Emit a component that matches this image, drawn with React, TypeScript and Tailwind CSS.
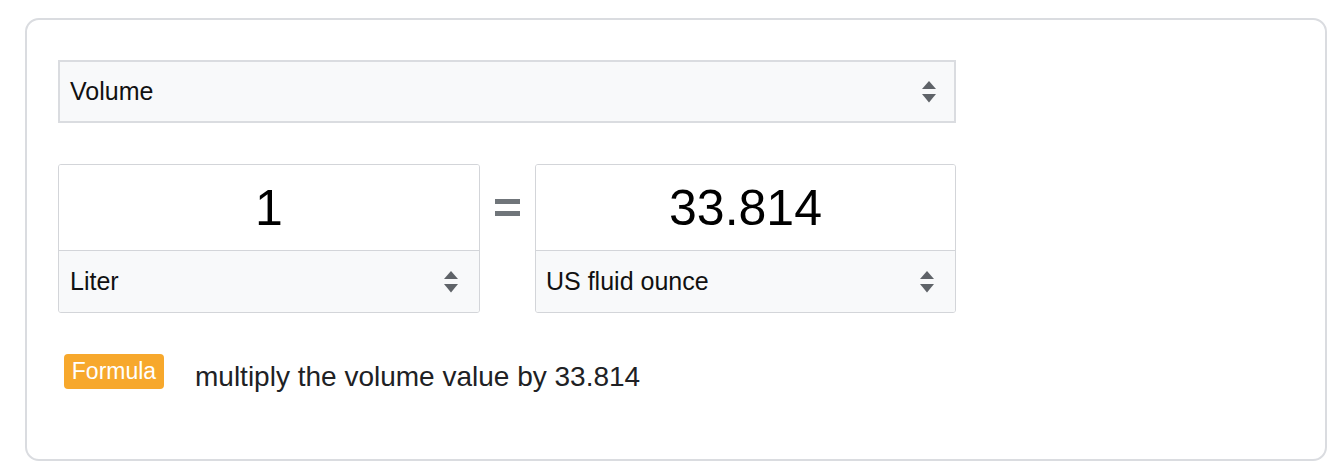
import React from "react";

function Arrows({ className = "" }: { className?: string }) {
  return (
    <svg width="14" height="22" viewBox="0 0 14 22" className={className} aria-hidden>
      <polygon points="7,0 14,8 0,8" fill="#5f6368" />
      <polygon points="0,13 14,13 7,21.5" fill="#5f6368" />
    </svg>
  );
}

export default function App() {
  return (
    <div className="w-[1344px] h-[476px] bg-white pt-[18px] pl-[25px]" style={{ fontFamily: '"Liberation Sans", Arial, sans-serif' }}>
      <div className="w-[1302px] h-[443px] border-2 border-[#dadce0] rounded-[14px] pt-[40px] pl-[31px]">
        <div className="w-[898px] h-[63px] border-2 border-[#dadce0] bg-[#f8f9fa] flex items-center justify-between pl-[10px] pr-[18px]">
          <span className="text-[25px] leading-none text-[#111]">Volume</span>
          <Arrows />
        </div>

        <div className="w-[898px] mt-[41px] grid grid-cols-[422px_55px_421px]">
          <div className="h-[149px] border border-[#d3d5d9] rounded-[3px] flex flex-col overflow-hidden">
            <div className="h-[86px] bg-white flex items-center justify-center border-b border-[#d3d5d9]">
              <span className="text-[50px] leading-none text-black">1</span>
            </div>
            <div className="flex-1 bg-[#f8f9fa] flex items-center justify-between pl-[11px] pr-[21px]">
              <span className="text-[25px] leading-none text-[#111]">Liter</span>
              <Arrows />
            </div>
          </div>

          <div className="flex flex-col items-center pt-[35px] gap-[6.5px]">
            <div className="w-[25px] h-[5px] bg-[#70757a]" />
            <div className="w-[25px] h-[5px] bg-[#70757a]" />
          </div>

          <div className="h-[149px] border border-[#d3d5d9] rounded-[3px] flex flex-col overflow-hidden">
            <div className="h-[86px] bg-white flex items-center justify-center border-b border-[#d3d5d9]">
              <span className="text-[50px] leading-none text-black">33.814</span>
            </div>
            <div className="flex-1 bg-[#f8f9fa] flex items-center justify-between pl-[10px] pr-[21px]">
              <span className="text-[25px] leading-none text-[#111]">US fluid ounce</span>
              <Arrows />
            </div>
          </div>
        </div>

        <div className="mt-[41px] ml-[6px] flex items-start">
          <div className="w-[100px] h-[35px] bg-[#f7a82c] rounded-[4px] flex items-center justify-center">
            <span className="text-[23px] leading-none text-white">Formula</span>
          </div>
          <span className="ml-[31px] mt-[8.5px] text-[28px] leading-none text-[#202124]">multiply the volume value by 33.814</span>
        </div>
      </div>
    </div>
  );
}
